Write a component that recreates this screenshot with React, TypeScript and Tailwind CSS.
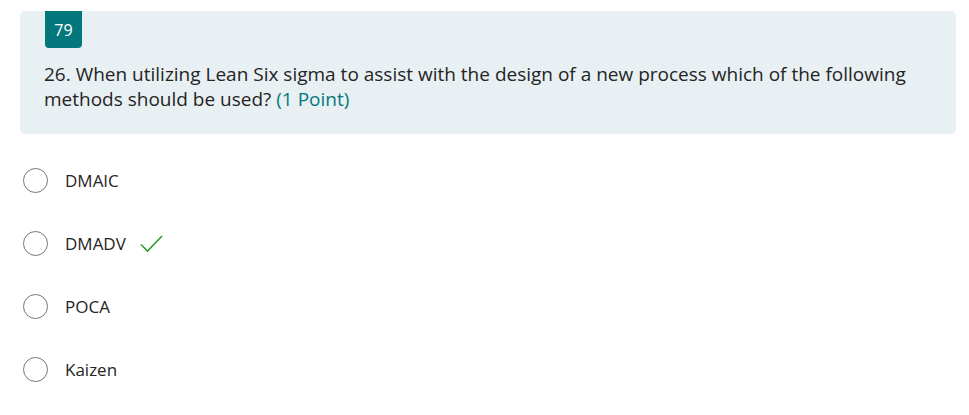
import React from 'react'

const options = [
  { label: "DMAIC", correct: false },
  { label: "DMADV", correct: true },
  { label: "POCA", correct: false },
  { label: "Kaizen", correct: false },
]

const Radio = () => (
  <span className="w-[25px] h-[25px] rounded-full border-[1.5px] border-[#767676] bg-white shrink-0" />
)

const Check = () => (
  <svg width="24" height="20" viewBox="0 0 24 20" className="ml-[14px]">
    <path d="M1 10.5 L7.5 17 L22 2" fill="none" stroke="#2f9a2f" strokeWidth="1.6" />
  </svg>
)

export default function App() {
  return (
    <div className="w-[969px] h-[415px] bg-white pt-[11px] px-[20px] text-[#252423]" style={{ fontFamily: '"Open Sans", "Noto Sans", sans-serif' }}>
      {/* question header */}
      <div className="w-[936px] h-[123px] bg-[#e8f0f3] rounded-[5px] pl-[25px] pr-6">
        <div className="w-[37px] h-[37px] bg-[#03787c] rounded-b-[4px] text-white text-[16px] flex items-center justify-center">
          79
        </div>
        <p className="mt-[14px] text-[19px] leading-[25px] -ml-[1px]">
          26. When utilizing Lean Six sigma to assist with the design of a new process which of the following methods should be used? <span className="text-[#03787c]">(1 Point)</span>
        </p>
      </div>

      {/* options */}
      <div className="mt-[34px] flex flex-col gap-[38px]">
        {options.map((o) => (
          <div key={o.label} className="flex items-center h-[25px] pl-[3px]">
            <Radio />
            <span className="ml-[17px] text-[17px]">{o.label}</span>
            {o.correct && <Check />}
          </div>
        ))}
      </div>
    </div>
  )
}
